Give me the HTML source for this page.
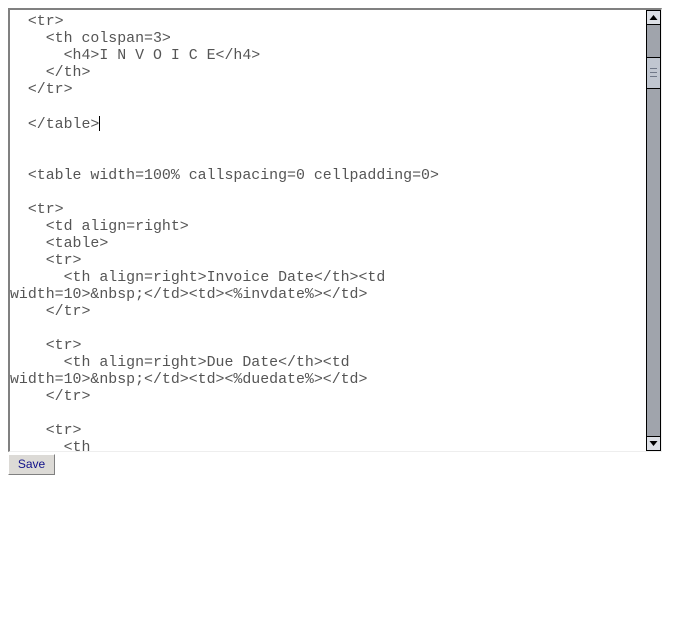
<!DOCTYPE html>
<html><head><style>
body{margin:0;background:#fff;width:678px;height:640px;overflow:hidden;position:relative;font-family:"Liberation Sans",sans-serif}
#ta{position:absolute;left:8px;top:8px;width:654px;height:444px;box-sizing:border-box;border-top:2px solid #808080;border-left:2px solid #808080;border-right:1px solid #eee;border-bottom:1px solid #eee;overflow:hidden;background:#fff}
pre{margin:0;position:absolute;left:0;top:4px;font-family:"Liberation Mono",monospace;font-size:14.9px;line-height:17px;color:#555;letter-spacing:0}
.cur{display:inline-block;width:1px;height:15px;background:#000;vertical-align:-3px}
#sb{position:absolute;left:646px;top:10px;width:15px;height:441px;background:#a0a4ac;box-sizing:border-box;border:1px solid #000}
.btn{position:absolute;left:0;width:13px;height:13px;background:#dde0e6}
#thumb{position:absolute;left:0;top:46px;width:13px;height:30px;background:#c0c6d0;border-top:1px solid #000;border-bottom:1px solid #000}
#thumb i{position:absolute;left:3px;width:7px;height:1px;background:#707888}
#save{position:absolute;left:8px;top:454px;width:47px;height:21px;box-sizing:border-box;background:#dcdad6;border:1px solid;border-color:#fff #808080 #808080 #fff;font-size:12px;color:#10108a;text-align:center;line-height:19px}
</style></head><body>
<div id="ta"><pre>  &lt;tr&gt;
    &lt;th colspan=3&gt;
      &lt;h4&gt;I N V O I C E&lt;/h4&gt;
    &lt;/th&gt;
  &lt;/tr&gt;

  &lt;/table&gt;<span class="cur"></span>


  &lt;table width=100% callspacing=0 cellpadding=0&gt;

  &lt;tr&gt;
    &lt;td align=right&gt;
    &lt;table&gt;
    &lt;tr&gt;
      &lt;th align=right&gt;Invoice Date&lt;/th&gt;&lt;td
width=10&gt;&amp;nbsp;&lt;/td&gt;&lt;td&gt;&lt;%invdate%&gt;&lt;/td&gt;
    &lt;/tr&gt;

    &lt;tr&gt;
      &lt;th align=right&gt;Due Date&lt;/th&gt;&lt;td
width=10&gt;&amp;nbsp;&lt;/td&gt;&lt;td&gt;&lt;%duedate%&gt;&lt;/td&gt;
    &lt;/tr&gt;

    &lt;tr&gt;
      &lt;th</pre></div>
<div id="sb">
<div class="btn" style="top:0;border-bottom:1px solid #000"><svg width="13" height="13"><path d="M2.5 9h8L6.5 4z" fill="#000"/></svg></div>
<div id="thumb"><i style="top:10px"></i><i style="top:14px"></i><i style="top:18px"></i></div>
<div class="btn" style="top:425px;border-top:1px solid #000"><svg width="13" height="13"><path d="M2.5 4h8L6.5 9z" fill="#000"/></svg></div>
</div>
<div id="save">Save</div>
</body></html>
